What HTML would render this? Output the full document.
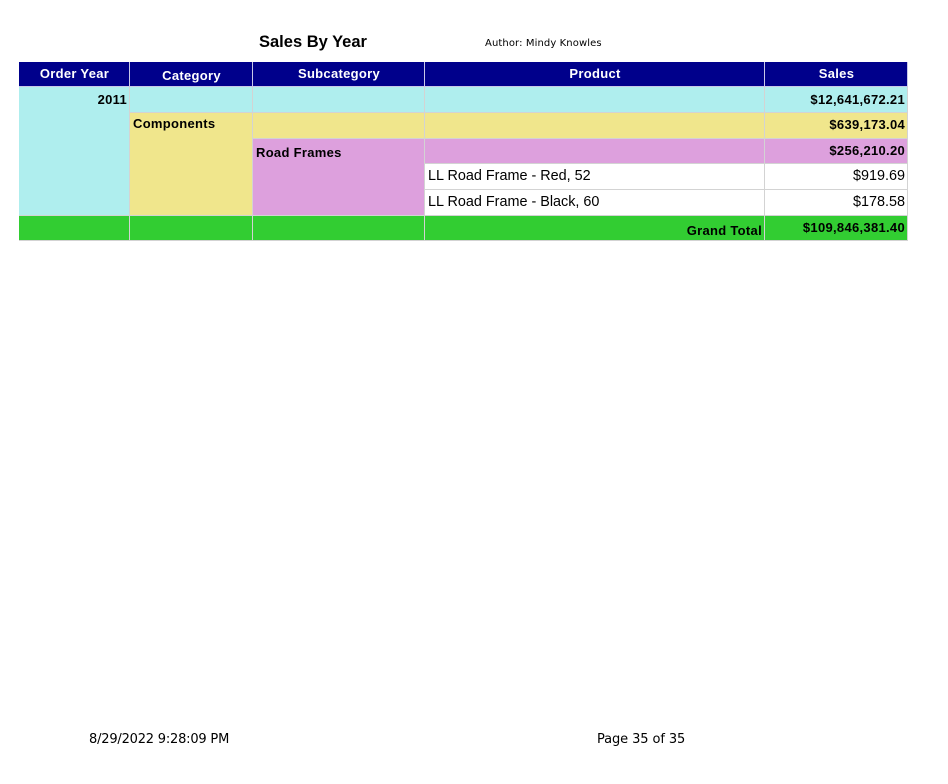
<!DOCTYPE html>
<html><head><style>
body{margin:0;width:948px;height:784px;background:#fff;position:relative;font-family:"Liberation Sans",Arial,sans-serif;overflow:hidden}
.c{position:absolute;box-sizing:border-box;border-right:1px solid #d3d3d3;border-bottom:1px solid #d3d3d3;font-size:13px;font-weight:bold;letter-spacing:0.3px;color:#000;white-space:nowrap;padding:0 2px 0 3px}
.h{background:#00008b;color:#fff;text-align:center;line-height:23px;border-color:#c8c8e8}
.b{background:#afeeee}.y{background:#f0e68c}.p{background:#dda0dd}.w{background:#fff;font-weight:normal;font-size:14.4px;letter-spacing:0}.g{background:#32cd32}
.r{text-align:right}
.t{position:absolute;font-family:"DejaVu Sans",sans-serif}
</style></head><body>
<div class="t" style="left:259px;top:33px;font-size:16.5px;font-weight:bold;font-family:'Liberation Sans',sans-serif">Sales By Year</div>
<div class="t" style="left:485px;top:38px;font-size:10px;letter-spacing:0.1px">Author: Mindy Knowles</div>

<div class="c h" style="left:19px;top:62px;width:111px;height:25px">Order Year</div>
<div class="c h" style="left:130px;top:62px;width:123px;height:25px;line-height:27px">Category</div>
<div class="c h" style="left:253px;top:62px;width:172px;height:25px">Subcategory</div>
<div class="c h" style="left:425px;top:62px;width:340px;height:25px">Product</div>
<div class="c h" style="left:765px;top:62px;width:143px;height:25px">Sales</div>

<div class="c b r" style="left:19px;top:87px;width:111px;height:129px;line-height:25px">2011</div>
<div class="c b" style="left:130px;top:87px;width:123px;height:26px"></div>
<div class="c b" style="left:253px;top:87px;width:172px;height:26px"></div>
<div class="c b" style="left:425px;top:87px;width:340px;height:26px"></div>
<div class="c b r" style="left:765px;top:87px;width:143px;height:26px;line-height:25px">$12,641,672.21</div>

<div class="c y" style="left:130px;top:113px;width:123px;height:103px;line-height:22px">Components</div>
<div class="c y" style="left:253px;top:113px;width:172px;height:26px"></div>
<div class="c y" style="left:425px;top:113px;width:340px;height:26px"></div>
<div class="c y r" style="left:765px;top:113px;width:143px;height:26px;line-height:23px">$639,173.04</div>

<div class="c p" style="left:253px;top:139px;width:172px;height:77px;line-height:27px">Road Frames</div>
<div class="c p" style="left:425px;top:139px;width:340px;height:25px"></div>
<div class="c p r" style="left:765px;top:139px;width:143px;height:25px;line-height:23px">$256,210.20</div>

<div class="c w" style="left:425px;top:164px;width:340px;height:26px;line-height:24px">LL Road Frame - Red, 52</div>
<div class="c w r" style="left:765px;top:164px;width:143px;height:26px;line-height:24px">$919.69</div>
<div class="c w" style="left:425px;top:190px;width:340px;height:26px;line-height:24px">LL Road Frame - Black, 60</div>
<div class="c w r" style="left:765px;top:190px;width:143px;height:26px;line-height:24px">$178.58</div>

<div class="c g" style="left:19px;top:216px;width:111px;height:25px"></div>
<div class="c g" style="left:130px;top:216px;width:123px;height:25px"></div>
<div class="c g" style="left:253px;top:216px;width:172px;height:25px"></div>
<div class="c g r" style="left:425px;top:216px;width:340px;height:25px;line-height:29px;padding-right:2px">Grand Total</div>
<div class="c g r" style="left:765px;top:216px;width:143px;height:25px;line-height:23px">$109,846,381.40</div>

<div class="t" style="left:89px;top:732px;font-size:13px;letter-spacing:-0.2px">8/29/2022 9:28:09 PM</div>
<div class="t" style="left:597px;top:732px;font-size:13px;letter-spacing:-0.1px">Page 35 of 35</div>
</body></html>
